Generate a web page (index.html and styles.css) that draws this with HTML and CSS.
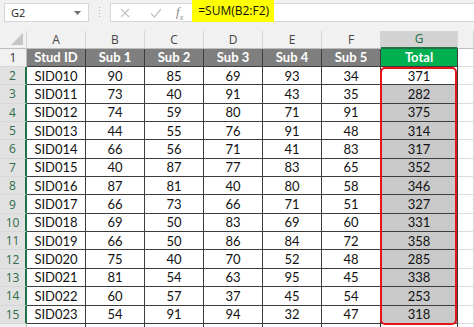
FILE: index.html
```html
<!DOCTYPE html>
<html lang="en">
<head>
    <meta charset="UTF-8">
    <title>Total with SUM</title>
    <link rel="stylesheet" href="styles.css">
</head>
<body>

    <!-- Formula bar -->
    <div class="topbar">
        <div class="namebox">
            <span>G2</span>
            <svg class="caret" width="7" height="4" viewBox="0 0 7 4"><path d="M0 0h7L3.5 4z" fill="#6d6d6d"/></svg>
        </div>
        <div class="grip">
            <svg width="3" height="13" viewBox="0 0 3 13"><g fill="#b0b0b0"><rect x="1" y="1" width="1" height="1"/><rect x="1" y="4" width="1" height="1"/><rect x="1" y="7" width="1" height="1"/><rect x="1" y="10" width="1" height="1"/></g></svg>
        </div>
        <div class="formula">
            <svg class="fbtn" width="10" height="10" viewBox="0 0 10 10"><path d="M1 1l8 8M9 1l-8 8" stroke="#c4c4c4" stroke-width="1.2"/></svg>
            <svg class="fbtn" width="12" height="10" viewBox="0 0 12 10"><path d="M1 5.5l3.5 3.5L11 1" stroke="#c4c4c4" stroke-width="1.2" fill="none"/></svg>
            <span class="fx">f<sub>x</sub></span>
            <span class="expr">=SUM(B2:F2)</span>
        </div>
    </div>

    <!-- Worksheet -->
    <div class="sheet">
        <div class="corner"><svg width="12" height="12" viewBox="0 0 12 12"><path d="M12 0v12H0z" fill="#c6c6c6"/></svg></div>
        <div class="col">A</div>
        <div class="col">B</div>
        <div class="col">C</div>
        <div class="col">D</div>
        <div class="col">E</div>
        <div class="col">F</div>
        <div class="col col-sel">G</div>
        <div class="col"></div>

        <div class="rowhead">1</div>
        <div class="cell head">Stud ID</div>
        <div class="cell head">Sub 1</div>
        <div class="cell head">Sub 2</div>
        <div class="cell head">Sub 3</div>
        <div class="cell head">Sub 4</div>
        <div class="cell head">Sub 5</div>
        <div class="cell head total">Total</div>
        <div class="cell blank"></div>
    </div>

    <script>
        const rows = [
            ['SID010', 90, 85, 69, 93, 34],
            ['SID011', 73, 40, 91, 43, 35],
            ['SID012', 74, 59, 80, 71, 91],
            ['SID013', 44, 55, 76, 91, 48],
            ['SID014', 66, 56, 71, 41, 83],
            ['SID015', 40, 87, 77, 83, 65],
            ['SID016', 87, 81, 40, 80, 58],
            ['SID017', 66, 73, 66, 71, 51],
            ['SID018', 69, 50, 83, 69, 60],
            ['SID019', 66, 50, 86, 84, 72],
            ['SID020', 75, 40, 70, 52, 48],
            ['SID021', 81, 54, 63, 95, 45],
            ['SID022', 60, 57, 37, 45, 54],
            ['SID023', 54, 91, 94, 32, 47]
        ];

        const sheet = document.querySelector('.sheet');

        const addCell = (cls, text) => {
            const div = document.createElement('div');
            div.className = cls;
            div.textContent = text;
            sheet.appendChild(div);
        };

        rows.forEach((row, i) => {
            addCell('rowhead row-sel', i + 2);
            row.forEach(value => addCell('cell', value));
            const total = row.slice(1).reduce((a, b) => a + b, 0);
            addCell(i === 0 ? 'cell sum active' : 'cell sum', total);
            addCell('cell blank', '');
        });

        // row 16, only its top edge shows
        addCell('rowhead', '');
        for (let c = 0; c < 7; c++) addCell('cell', '');
        addCell('cell blank', '');

        // selection outline over G2:G15
        const sel = document.createElement('div');
        sel.className = 'selection';
        sheet.appendChild(sel);
    </script>

</body>
</html>
```

FILE: styles.css
```css
/* General reset */
* {
    margin: 0;
    padding: 0;
    box-sizing: border-box;
}

body {
    width: 474px;
    height: 327px;
    overflow: hidden;
    background-color: #f1f1f1;
    font-family: "Open Sans", sans-serif;
}

/* Formula bar */
.topbar {
    display: flex;
    align-items: flex-start;
    height: 31px;
    padding-top: 3px;
}

.namebox {
    display: flex;
    align-items: center;
    justify-content: space-between;
    width: 85px;
    height: 19px;
    margin-left: 4px;
    padding: 0 7px 0 6px;
    background-color: #fff;
    border: 1px solid #d6d6d6;
    font-size: 11px;
    color: #222;
}

.grip {
    width: 21px;
    height: 19px;
    display: flex;
    align-items: center;
    justify-content: center;
}

.formula {
    flex: 1;
    display: flex;
    align-items: center;
    height: 19px;
    background-color: #fff;
    border: 1px solid #d6d6d6;
    border-right: none;
}

.fbtn {
    margin-left: 9px;
}

.formula .fbtn:first-child {
    margin-left: 9px;
    margin-right: 11px;
}

.fx {
    margin-left: 14px;
    font-family: "Liberation Serif", serif;
    font-style: italic;
    font-size: 13px;
    color: #8a8a8a;
}

.fx sub {
    font-size: 8px;
}

.expr {
    align-self: flex-start;
    margin-top: -4px;
    margin-left: 9px;
    height: 22px;
    padding: 0 5px 0 6px;
    line-height: 22px;
    background-color: #ffff00;
    font-size: 12px;
    color: #111;
}

/* Worksheet grid */
.sheet {
    position: relative;
    display: grid;
    grid-template-columns: 27px repeat(6, 59px) 77px 1fr;
    grid-template-rows: 17.5px;
    grid-auto-rows: 18.36px;
    background-color: #fff;
}

.corner {
    display: flex;
    align-items: flex-end;
    justify-content: flex-end;
    padding: 0 3px 3px 0;
    background-color: #f1f1f1;
    border-right: 1px solid #d4d4d4;
    border-bottom: 1px solid #bdbdbd;
}

.col {
    display: flex;
    align-items: center;
    justify-content: center;
    background-color: #f1f1f1;
    border-right: 1px solid #d4d4d4;
    border-bottom: 1px solid #bdbdbd;
    font-size: 12px;
    color: #444;
}

.col-sel {
    background-color: #d3d3d3;
    border-bottom: 2px solid #217346;
    color: #1e6b41;
}

.rowhead {
    display: flex;
    align-items: center;
    justify-content: center;
    background-color: #f1f1f1;
    border-right: 1px solid #bdbdbd;
    border-bottom: 1px solid #d8d8d8;
    font-size: 12px;
    color: #333;
}

.row-sel {
    background-color: #e1e1e1;
    border-right: 2px solid #217346;
    color: #2f6d48;
}

.cell {
    display: flex;
    align-items: center;
    justify-content: center;
    border-right: 1px solid #3c3c3c;
    border-bottom: 1px solid #3c3c3c;
    font-family: Lato, "Open Sans", sans-serif;
    font-size: 13px;
    color: #111;
}

.cell.head {
    background-color: #7f7f7f;
    color: #fff;
    font-weight: bold;
}

.cell.total {
    background-color: #00b050;
}

.cell.sum {
    background-color: #c9c9c9;
}

.cell.sum.active {
    background-color: #fff;
}

.cell.blank {
    border-right: 1px solid #dcdcdc;
    border-bottom: 1px solid #dcdcdc;
}

/* Red outline around the totals, laid over the grid area G2:G15 */
.selection {
    position: absolute;
    inset: 0 1px -1px -1px;
    grid-column: 8 / 9;
    grid-row: 3 / 17;
    border: 2px solid #e3141c;
    border-radius: 5px;
    pointer-events: none;
}
```
